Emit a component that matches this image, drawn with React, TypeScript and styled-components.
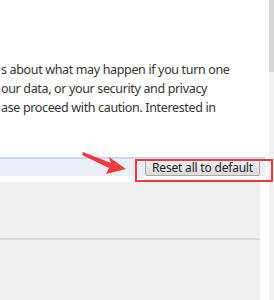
import React from "react";
import styled, { createGlobalStyle } from "styled-components";

const TextGray = "#333333";
const BarBlue = "#e9eef9";
const BarLine = "#cdd6ec";
const PanelGray = "#efefef";
const AnnotRed = "#ee3a3a";

const GlobalStyle = createGlobalStyle`
  html, body {
    margin: 0;
    padding: 0;
    background: #ffffff;
    overflow: hidden;
  }
`;

const Page = styled.div`
  position: relative;
  display: flex;
  width: 274px;
  height: 300px;
  overflow: hidden;
  font-family: "Noto Sans", "Open Sans", sans-serif;
`;

const Main = styled.div`
  display: flex;
  flex-direction: column;
  width: 269px;
`;

const Description = styled.div`
  padding: 60px 0 0 1px;
  color: ${TextGray};
  font-size: 12.5px;
  line-height: 19px;
  letter-spacing: -0.35px;
  white-space: nowrap;
`;

const Line = styled.div``;

const ActionBar = styled.div`
  display: flex;
  justify-content: flex-end;
  align-items: center;
  width: 265px;
  height: 27px;
  margin-top: 40px;
  box-sizing: border-box;
  padding-right: 5px;
  background: ${BarBlue};
  border-top: 2px solid ${BarLine};
`;

const ResetButton = styled.button`
  height: 17px;
  width: 115px;
  padding: 0;
  box-sizing: border-box;
  border: 1px solid #a9a9a9;
  border-radius: 2px;
  background: linear-gradient(#f2f2f2, #dcdcdc);
  color: #222;
  font-family: "Noto Sans", "Open Sans", sans-serif;
  font-size: 12px;
  line-height: 14px;
  letter-spacing: -0.2px;
`;

const Panel = styled.div`
  margin-top: 6px;
  width: 260px;
  display: flex;
  flex-direction: column;
`;

const PanelSection = styled.div<{ $h: number }>`
  height: ${(p) => p.$h}px;
  background: ${PanelGray};
`;

const PanelDivider = styled.div`
  height: 2px;
  background: #d9d9d9;
`;

const Scrollbar = styled.div`
  width: 5px;
  display: flex;
  flex-direction: column;
  background: #f0f0f0;
`;

const Thumb = styled.div`
  height: 72px;
  background: #d6d6d6;
`;

const Highlight = styled.div`
  position: absolute;
  left: 135px;
  top: 159px;
  width: 138px;
  height: 23px;
  box-sizing: border-box;
  border: 2px solid ${AnnotRed};
`;

const Arrow = styled.svg`
  position: absolute;
  left: 80px;
  top: 148px;
`;

export default function App() {
  return (
    <>
      <GlobalStyle />
      <Page>
        <Main>
          <Description>
            <Line>s about what may happen if you turn one</Line>
            <Line>our data, or your security and privacy</Line>
            <Line>ase proceed with caution. Interested in</Line>
          </Description>
          <ActionBar>
            <ResetButton>Reset all to default</ResetButton>
          </ActionBar>
          <Panel>
            <PanelSection $h={56} />
            <PanelDivider />
            <PanelSection $h={60} />
          </Panel>
        </Main>
        <Scrollbar>
          <Thumb />
        </Scrollbar>
        <Highlight />
        <Arrow width="50" height="30" viewBox="0 0 50 30">
          <path d="M3 4 L31 15 L29 9 L46 21 L26 26 L29 20 L2 7 Z" fill={AnnotRed} />
        </Arrow>
      </Page>
    </>
  );
}
